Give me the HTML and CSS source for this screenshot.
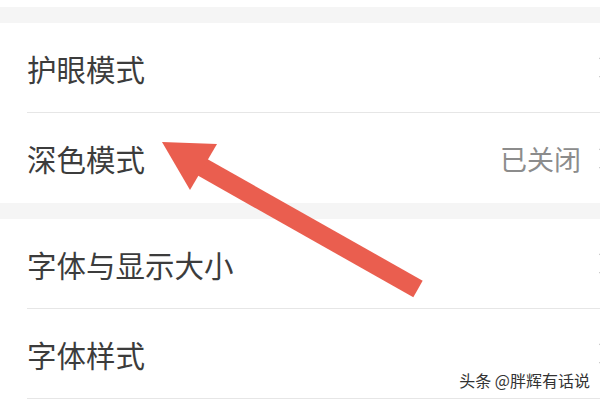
FILE: index.html
```html
<!DOCTYPE html>
<html lang="zh-CN">
<head>
    <meta charset="UTF-8">
    <meta name="viewport" content="width=device-width, initial-scale=1.0">
    <title>显示设置</title>
    <link rel="stylesheet" href="styles.css">
</head>
<body>
    <div class="page">
        <div class="top-strip"></div>
        <div class="gap"></div>

        <div class="group">
            <div class="row">
                <span class="label">护眼模式</span>
                <span class="right"><span class="chevron"></span></span>
            </div>
            <div class="row last">
                <span class="label">深色模式</span>
                <span class="right"><span class="value">已关闭</span><span class="chevron"></span></span>
            </div>
        </div>

        <div class="gap"></div>

        <div class="group">
            <div class="row">
                <span class="label">字体与显示大小</span>
                <span class="right"><span class="chevron"></span></span>
            </div>
            <div class="row">
                <span class="label">字体样式</span>
                <span class="right"><span class="chevron"></span></span>
            </div>
        </div>

        <!-- annotation arrow drawn over the list -->
        <svg class="arrow" width="600" height="400" viewBox="0 0 600 400">
            <line x1="418" y1="289" x2="195" y2="163" stroke="#ea5e4f" stroke-width="19" />
            <polygon points="162,142 217,144 190,190" fill="#ea5e4f" />
        </svg>

        <div class="watermark">头条 @胖辉有话说</div>
    </div>
</body>
</html>
```

FILE: styles.css
```css
body {
    margin: 0;
    background-color: #fff;
    font-family: "Noto Sans CJK SC", "Noto Sans", sans-serif;
    overflow: hidden;
}
.page {
    position: relative;
    width: 600px;
    height: 400px;
    overflow: hidden;
}
.top-strip {
    height: 7px;
    background-color: #fff;
}
.gap {
    height: 16px;
    background-color: #f5f5f5;
}
.group {
    background-color: #fff;
}
.row {
    display: flex;
    justify-content: space-between;
    align-items: center;
    height: 89px;
    margin-left: 27px;
    border-bottom: 1px solid #e6e6e6;
}
.row.last {
    border-bottom: none;
    height: 90px;
}
.label {
    font-size: 29.5px;
    color: #3c3c3c;
}
.right {
    display: flex;
    align-items: center;
    margin-right: -8px;
}
.value {
    font-size: 27px;
    color: #8c8c8c;
    margin-right: 12px;
}
.chevron {
    width: 13px;
    height: 13px;
    border-top: 2px solid #b0b0b0;
    border-right: 2px solid #b0b0b0;
    transform: rotate(45deg);
}
.arrow {
    position: absolute;
    left: 0;
    top: 0;
}
.watermark {
    position: absolute;
    right: 10px;
    bottom: 8px;
    font-size: 16px;
    color: #333;
    text-shadow: 0 0 2px #fff;
}
```
